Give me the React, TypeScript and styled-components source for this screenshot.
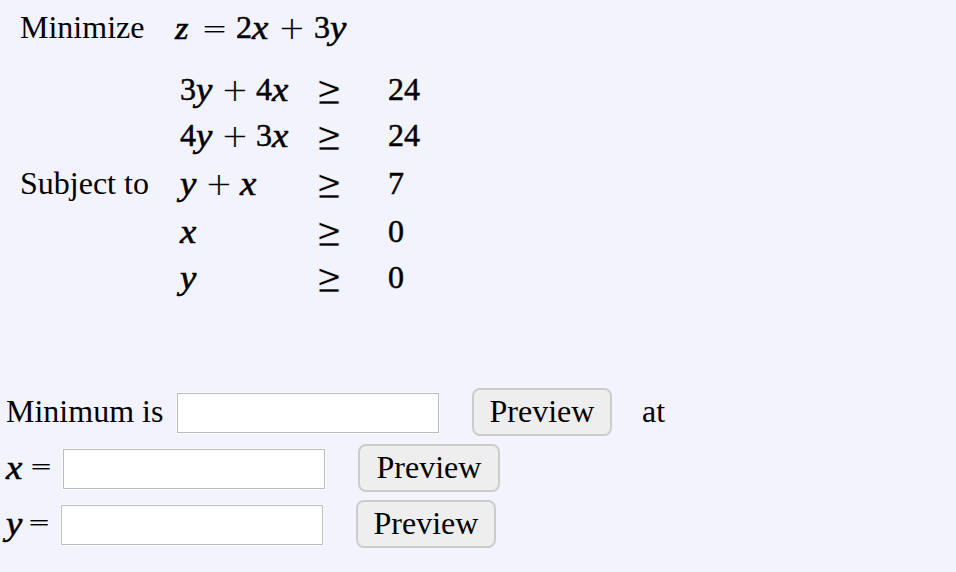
import React from "react";
import styled, { createGlobalStyle } from "styled-components";

const GlobalStyle = createGlobalStyle`
  * {
    box-sizing: border-box;
  }
  body {
    margin: 0;
    background-color: #f3f3fe;
    color: #000;
    font-family: "Liberation Serif", "Times New Roman", serif;
    font-size: 32px;
  }
`;

const Page = styled.main`
  min-height: 572px;
  padding-top: 3px;
  white-space: nowrap;
`;

const Objective = styled.section`
  display: flex;
  height: 48px;
  padding-left: 20px;
  line-height: 48px;
`;

const Problem = styled.section`
  display: flex;
  flex-direction: column;
  margin-top: 15px;
  padding-left: 20px;
`;

const Row = styled.div<{ $height: number }>`
  display: flex;
  height: ${({ $height }) => $height}px;
  line-height: ${({ $height }) => $height}px;
`;

const Label = styled.span<{ $width: number }>`
  flex: 0 0 ${({ $width }) => $width}px;
`;

const Expression = styled.span<{ $width?: number }>`
  flex: 0 0 ${({ $width }) => ($width ? `${$width}px` : "auto")};
`;

const Digit = styled.span`
  display: inline-block;
  width: 16px;
  line-height: 0;
  -webkit-text-stroke: 0.5px #000;
`;

const Variable = styled.i<{ $size?: number }>`
  display: inline-block;
  width: 18px;
  font-size: ${({ $size = 34 }) => $size}px;
  line-height: 0;
  vertical-align: -1px;
  transform: scaleX(1.08);
  transform-origin: left;
  -webkit-text-stroke: 0.6px #000;
`;

const Operator = styled.span<{ $width?: number; $size?: number; $shift?: number }>`
  display: inline-block;
  width: ${({ $width = 42 }) => $width}px;
  font-family: "DejaVu Sans Light", "DejaVu Sans", sans-serif;
  font-size: ${({ $size = 32 }) => $size}px;
  font-weight: 200;
  line-height: 0;
  text-align: center;
  vertical-align: ${({ $shift = -1 }) => $shift}px;
  -webkit-text-stroke: 0.2px #000;
`;

const Relation = styled.span`
  display: inline-block;
  width: 40px;
  font-family: "DejaVu Math TeX Gyre", "DejaVu Serif", serif;
  font-size: 36px;
  line-height: 0;
  text-align: center;
  vertical-align: -2px;
  transform: scale(0.86, 1.06);
  /* thins the strokes of the glyph */
  -webkit-text-stroke: 0.5px #f3f3fe;
`;

const Form = styled.form`
  display: flex;
  flex-direction: column;
  margin-top: 84px;
  padding-left: 6px;
`;

const Field = styled.div`
  display: flex;
  align-items: center;
  height: 56px;
`;

const FieldLabel = styled.label<{ $width: number }>`
  flex: 0 0 ${({ $width }) => $width}px;
  height: 56px;
  line-height: 54px;
`;

const Input = styled.input`
  width: 262px;
  height: 40px;
  margin: 2px 33px 0 0;
  padding: 0 6px;
  border: 1px solid #bbb;
  border-radius: 0;
  background-color: #fff;
  box-shadow: 0 0 0 1px #fafaff;
  font: inherit;
  outline: none;
`;

const Button = styled.button<{ $width?: number }>`
  width: ${({ $width = 140 }) => $width}px;
  height: 48px;
  padding: 0 0 2px;
  border: 2px solid #ccc;
  border-radius: 8px;
  background-color: #eee;
  color: #000;
  font: inherit;
  line-height: 42px;
`;

const Trailing = styled.span`
  margin-left: 30px;
  height: 56px;
  line-height: 54px;
`;

const constraints = [
  { left: "3y+4x", right: "24", height: 46 },
  { left: "4y+3x", right: "24", height: 47 },
  { left: "y+x", right: "7", height: 48, label: "Subject to" },
  { left: "x", right: "0", height: 48 },
  { left: "y", right: "0", height: 45 },
];

function Formula({ children }: { children: string }) {
  return (
    <>
      {children.split("").map((char, index) => {
        if (/\d/.test(char)) return <Digit key={index}>{char}</Digit>;
        if (/[a-z]/.test(char)) return <Variable key={index}>{char}</Variable>;
        return <Operator key={index}>{char}</Operator>;
      })}
    </>
  );
}

export default function App() {
  return (
    <>
      <GlobalStyle />
      <Page>
        <Objective>
          <Label $width={155}>Minimize</Label>
          <Expression>
            <Variable $size={32}>z</Variable>
            <Operator $width={43} $size={31}>=</Operator>
            <Formula>2x</Formula>
            <Operator $width={44}>+</Operator>
            <Formula>3y</Formula>
          </Expression>
        </Objective>
        <Problem>
          {constraints.map(({ left, right, height, label }) => (
            <Row key={left} $height={height}>
              <Label $width={160}>{label}</Label>
              <Expression $width={129}>
                <Formula>{left}</Formula>
              </Expression>
              <Expression $width={79}>
                <Relation>≥</Relation>
              </Expression>
              <Expression>
                <Formula>{right}</Formula>
              </Expression>
            </Row>
          ))}
        </Problem>
        <Form onSubmit={(event) => event.preventDefault()}>
          <Field>
            <FieldLabel htmlFor="minimum" $width={171}>
              Minimum is
            </FieldLabel>
            <Input id="minimum" />
            <Button type="button">Preview</Button>
            <Trailing>at</Trailing>
          </Field>
          <Field>
            <FieldLabel htmlFor="x" $width={57}>
              <Variable>x</Variable>
              <Operator $width={34} $size={27} $shift={3}>=</Operator>
            </FieldLabel>
            <Input id="x" />
            <Button type="button" $width={142}>Preview</Button>
          </Field>
          <Field>
            <FieldLabel htmlFor="y" $width={55}>
              <Variable>y</Variable>
              <Operator $width={30} $size={27} $shift={3}>=</Operator>
            </FieldLabel>
            <Input id="y" />
            <Button type="button">Preview</Button>
          </Field>
        </Form>
      </Page>
    </>
  );
}
